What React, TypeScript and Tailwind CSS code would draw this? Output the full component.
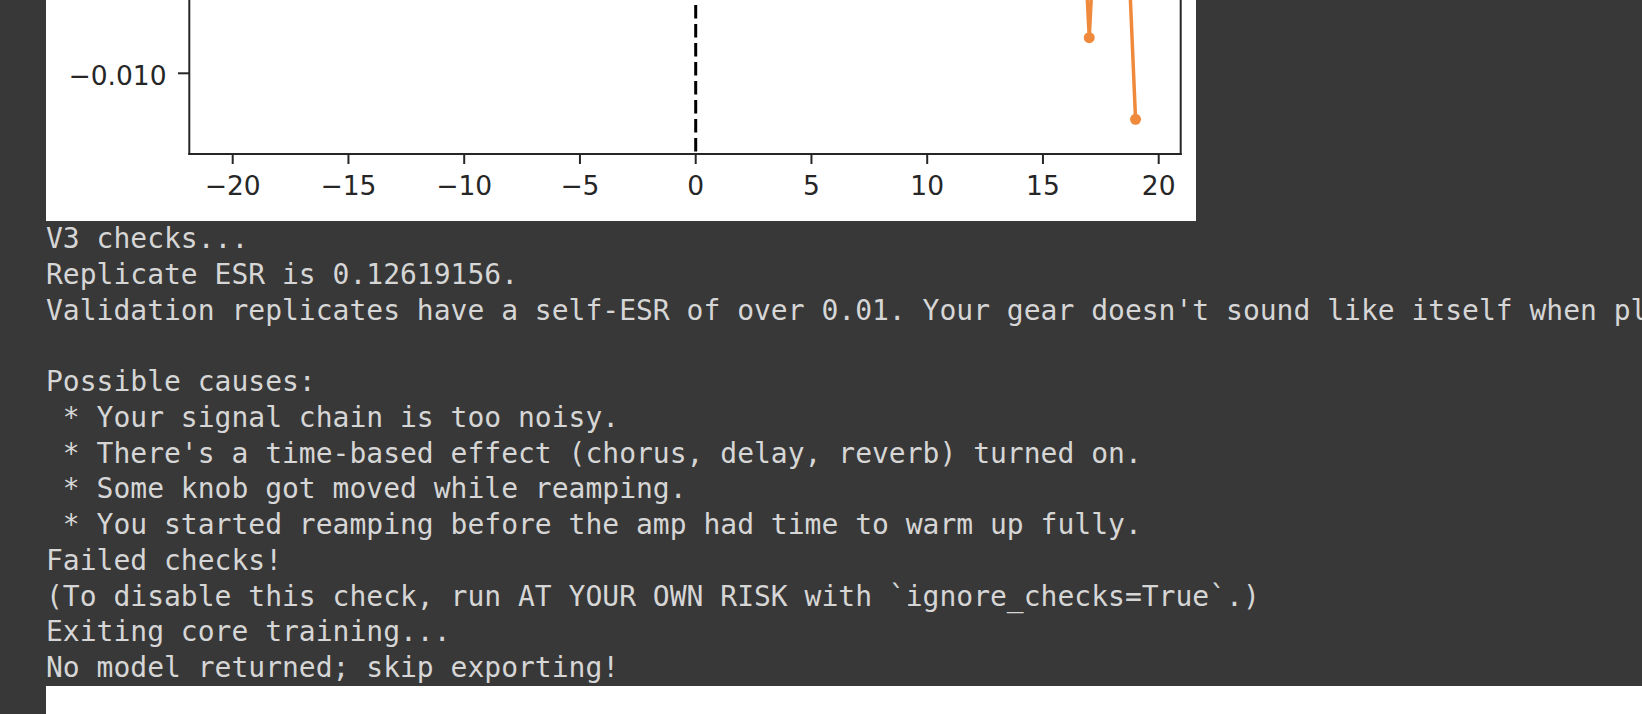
import React from 'react'

const lines: string[] = [
  'V3 checks...',
  'Replicate ESR is 0.12619156.',
  "Validation replicates have a self-ESR of over 0.01. Your gear doesn't sound like itself when played twice!",
  '',
  'Possible causes:',
  ' * Your signal chain is too noisy.',
  " * There's a time-based effect (chorus, delay, reverb) turned on.",
  ' * Some knob got moved while reamping.',
  ' * You started reamping before the amp had time to warm up fully.',
  'Failed checks!',
  '(To disable this check, run AT YOUR OWN RISK with `ignore_checks=True`.)',
  'Exiting core training...',
  'No model returned; skip exporting!',
]

// x axis: 0 -> 649.7px, 23.15px per unit (panel coords)
const xPos = (v: number) => 649.7 + v * 23.15

const xTicks = [-20, -15, -10, -5, 0, 5, 10, 15, 20]

function fmt(v: number) {
  return v < 0 ? `\u2212${Math.abs(v)}` : `${v}`
}

function Plot() {
  const pts: Array<[number, number]> = [
    [xPos(16), -420],
    [xPos(17), 37.7],
    [xPos(18), -419],
    [xPos(19), 119.3],
  ]
  const spine = '#262626'
  return (
    <svg width={1150} height={221} viewBox="0 0 1150 221" className="block">
      <rect x={0} y={0} width={1150} height={221} fill="#ffffff" />
      {/* zero marker */}
      <line x1={649.7} y1={5} x2={649.7} y2={154} stroke="#000" strokeWidth={3} strokeDasharray="13.5 5.5" />
      {/* data */}
      <polyline
        points={pts.map(([x, y]) => `${x},${y}`).join(' ')}
        fill="none"
        stroke="#ef8a3c"
        strokeWidth={3.5}
        strokeLinejoin="round"
      />
      {pts
        .filter(([, y]) => y > 0)
        .map(([x, y], i) => (
          <circle key={i} cx={x} cy={y} r={5.5} fill="#ef8a3c" />
        ))}
      {/* spines */}
      <line x1={143.3} y1={0} x2={143.3} y2={155} stroke={spine} strokeWidth={2} />
      <line x1={1134.7} y1={0} x2={1134.7} y2={155} stroke={spine} strokeWidth={2} />
      <line x1={142.3} y1={154} x2={1135.7} y2={154} stroke={spine} strokeWidth={2} />
      {/* y tick */}
      <line x1={132} y1={73.3} x2={143.3} y2={73.3} stroke={spine} strokeWidth={2} />
      <text
        x={120.5}
        y={85}
        textAnchor="end"
        fontFamily="'DejaVu Sans', sans-serif"
        fontSize={26.5}
        fill="#262626"
      >
        {'\u22120.010'}
      </text>
      {/* x ticks */}
      {xTicks.map((t) => (
        <g key={t}>
          <line x1={xPos(t)} y1={154} x2={xPos(t)} y2={164} stroke={spine} strokeWidth={2} />
          <text
            x={xPos(t)}
            y={195}
            textAnchor="middle"
            fontFamily="'DejaVu Sans', sans-serif"
            fontSize={26.5}
            fill="#262626"
          >
            {fmt(t)}
          </text>
        </g>
      ))}
    </svg>
  )
}

export default function App() {
  return (
    <div className="w-[1642px] h-[714px] overflow-hidden bg-[#383838] pl-[46px] flex flex-col">
      {/* Cell output: plot image */}
      <div className="w-[1150px] h-[221px] shrink-0">
        <Plot />
      </div>

      {/* Cell output: stdout (long line runs off the right edge, as in the notebook) */}
      <div className="flex flex-col text-[#d6d6d6] text-[28px] leading-[35.77px] font-['DejaVu_Sans_Mono',monospace] shrink-0">
        {lines.map((line, i) => (
          <div key={i} className="whitespace-pre h-[35.77px]">
            {line}
          </div>
        ))}
      </div>

      {/* Next output block */}
      <div className="flex-1 bg-white" />
    </div>
  )
}
